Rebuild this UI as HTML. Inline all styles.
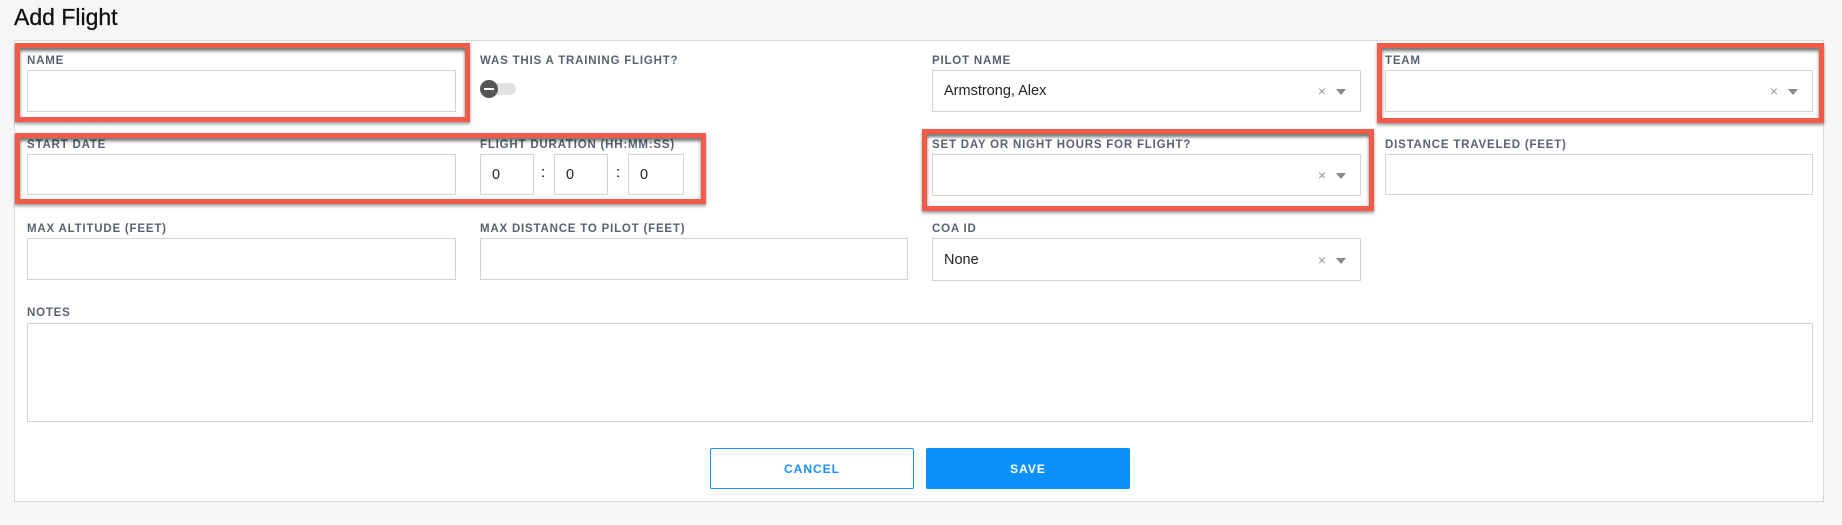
<!DOCTYPE html>
<html><head><style>
*{box-sizing:border-box;margin:0;padding:0}
body{width:1842px;height:525px;background:#f5f6f8;font-family:"Liberation Sans",sans-serif;position:relative;overflow:hidden}
.abs{position:absolute}
h1{position:absolute;left:14px;top:4px;font-size:23px;font-weight:normal;color:#111;-webkit-text-stroke:.3px #111}
.card{position:absolute;left:14px;top:40px;width:1810px;height:462px;background:#fff;border:1px solid #d8d8d8}
.lbl{position:absolute;font-size:11.5px;font-weight:bold;color:#5a6272;letter-spacing:.8px}
.inp{position:absolute;border:1px solid #d4d4d4;background:#fff;font-size:14.5px;color:#222;padding-left:11px;display:flex;align-items:center}
.sel .x{position:absolute;right:34px;top:50%;transform:translateY(-50%);color:#999;font-size:14px}
.sel .c{position:absolute;right:14px;top:50%;margin-top:-2px;border-left:5px solid transparent;border-right:5px solid transparent;border-top:6px solid #888}
.red{position:absolute;border:5px solid #f25a4a;box-shadow:inset 0 3px 3px rgba(0,0,0,.55),0 2px 3px rgba(0,0,0,.4)}
.btn{position:absolute;top:448px;height:41px;width:204px;display:flex;align-items:center;justify-content:center;font-size:12px;font-weight:bold;letter-spacing:1px;border-radius:2px}
</style></head><body>
<h1>Add Flight</h1>
<div class="card"></div>

<div class="lbl" style="left:27px;top:55px">NAME</div>
<div class="inp" style="left:27px;top:70px;width:429px;height:42px"></div>
<div class="lbl" style="left:480px;top:55px">WAS THIS A TRAINING FLIGHT?</div>
<div class="abs" style="left:484px;top:83px;width:32px;height:12px;border-radius:6px;background:#e2e2e2"></div>
<div class="abs" style="left:480px;top:80px;width:18px;height:18px;border-radius:50%;background:#555"><div class="abs" style="left:4px;top:8px;width:10px;height:2px;background:#fff"></div></div>
<div class="lbl" style="left:932px;top:55px">PILOT NAME</div>
<div class="inp sel" style="left:932px;top:70px;width:429px;height:42px">Armstrong, Alex<span class="x">×</span><span class="c"></span></div>
<div class="lbl" style="left:1385px;top:55px">TEAM</div>
<div class="inp sel" style="left:1385px;top:70px;width:428px;height:42px"><span class="x">×</span><span class="c"></span></div>

<div class="lbl" style="left:27px;top:139px">START DATE</div>
<div class="inp" style="left:27px;top:154px;width:429px;height:41px"></div>
<div class="lbl" style="left:480px;top:139px">FLIGHT DURATION (HH:MM:SS)</div>
<div class="inp" style="left:480px;top:154px;width:54px;height:41px">0</div>
<div class="abs" style="left:541px;top:164px;font-size:15px">:</div>
<div class="inp" style="left:554px;top:154px;width:54px;height:41px">0</div>
<div class="abs" style="left:616px;top:164px;font-size:15px">:</div>
<div class="inp" style="left:628px;top:154px;width:56px;height:41px">0</div>
<div class="lbl" style="left:932px;top:139px">SET DAY OR NIGHT HOURS FOR FLIGHT?</div>
<div class="inp sel" style="left:932px;top:154px;width:429px;height:42px"><span class="x">×</span><span class="c"></span></div>
<div class="lbl" style="left:1385px;top:139px">DISTANCE TRAVELED (FEET)</div>
<div class="inp" style="left:1385px;top:154px;width:428px;height:41px"></div>

<div class="lbl" style="left:27px;top:223px">MAX ALTITUDE (FEET)</div>
<div class="inp" style="left:27px;top:238px;width:429px;height:42px"></div>
<div class="lbl" style="left:480px;top:223px">MAX DISTANCE TO PILOT (FEET)</div>
<div class="inp" style="left:480px;top:238px;width:428px;height:42px"></div>
<div class="lbl" style="left:932px;top:223px">COA ID</div>
<div class="inp sel" style="left:932px;top:238px;width:429px;height:43px">None<span class="x">×</span><span class="c"></span></div>

<div class="lbl" style="left:27px;top:307px">NOTES</div>
<div class="inp" style="left:27px;top:323px;width:1786px;height:99px"></div>

<div class="btn" style="left:710px;border:1px solid #1890ff;color:#1890ff;background:#fff">CANCEL</div>
<div class="btn" style="left:926px;background:#0a91fc;color:#fff">SAVE</div>

<div class="red" style="left:15px;top:43px;width:455px;height:79px"></div>
<div class="red" style="left:15px;top:133px;width:691px;height:71px"></div>
<div class="red" style="left:922px;top:129px;width:452px;height:82px"></div>
<div class="red" style="left:1377px;top:43px;width:447px;height:80px"></div>
</body></html>
